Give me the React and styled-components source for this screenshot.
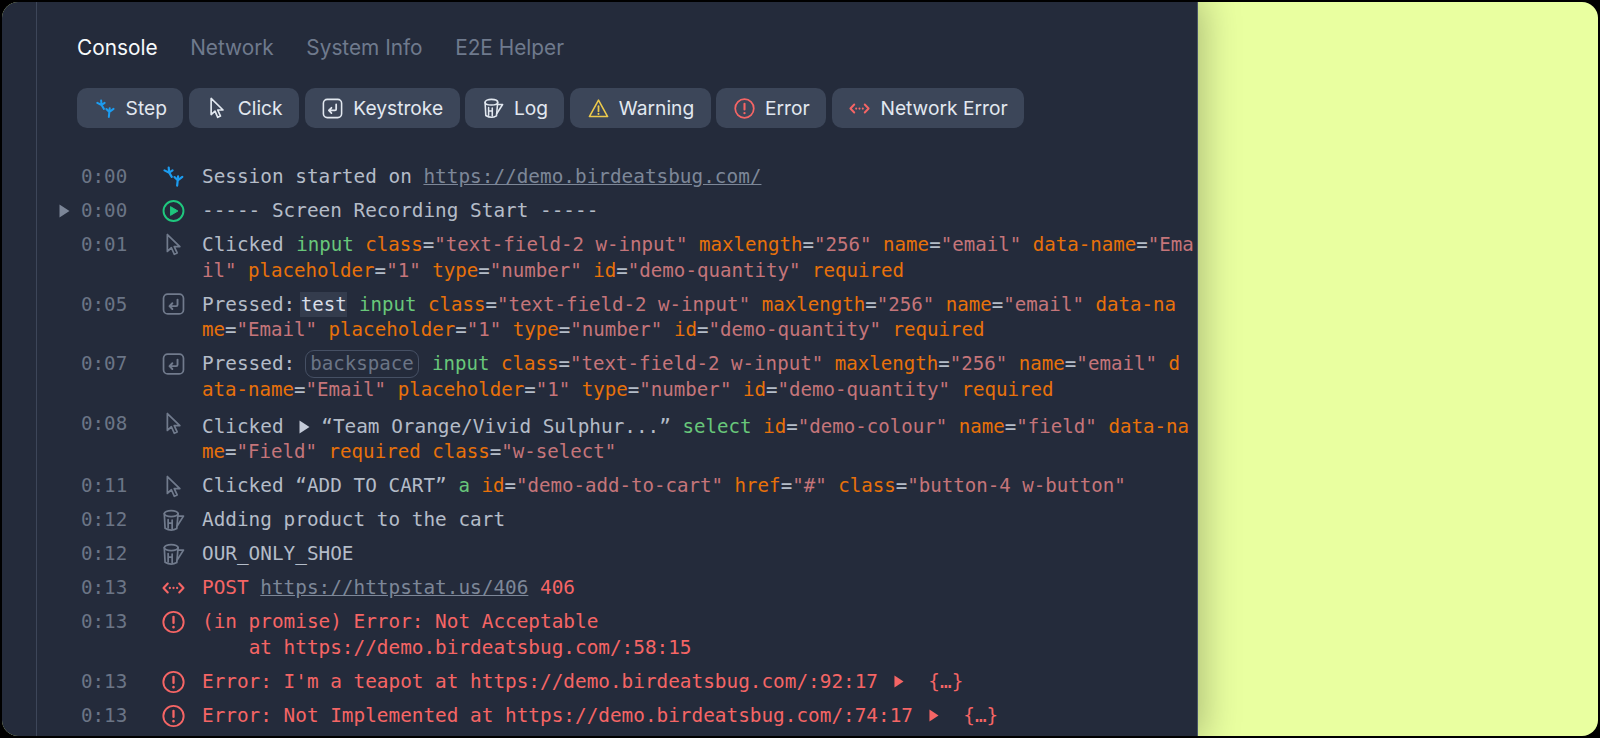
import React from "react";
import styled, { createGlobalStyle } from "styled-components";

const Global = createGlobalStyle`
  html, body { margin: 0; padding: 0; height: 100%; background: #000; }
  #root { height: 100%; }
`;

const Frame = styled.div`
  box-sizing: border-box;
  height: 738px;
  width: 1600px;
  padding: 2px;
  background: #000;
`;
const Window = styled.div`
  display: flex;
  height: 100%;
  border-radius: 16px;
  overflow: hidden;
  background: #e9ffa0;
`;
const Panel = styled.div`
  display: flex;
  flex: none;
  width: 1195px;
  height: 100%;
  background: #242b3b;
  border-right: 1px solid #4a5568;
  box-shadow: 0 0 36px 4px rgba(0, 0, 0, 0.28);
  overflow: hidden;
`;
const Rail = styled.div`
  flex: none;
  width: 34px;
  border-right: 1px solid #3d4659;
`;
const Main = styled.div`
  flex: 1;
  min-width: 0;
  padding: 31px 0 0 40px;
`;
const Tabs = styled.div`
  display: flex;
  gap: 32.6px;
  height: 30px;
  align-items: center;
`;
const Tab = styled.div`
  font: 400 20.8px/30px Inter, "Liberation Sans", sans-serif;
  color: ${(p) => (p.$active ? "#f7fafc" : "#6f7a8d")};
`;
const Filters = styled.div`
  display: flex;
  gap: 5.8px;
  margin-top: 25px;
`;
const Filter = styled.div`
  display: flex;
  align-items: center;
  height: 40px;
  padding: 0 16.4px 0 16px;
  border-radius: 10px;
  background: #3c4659;
  color: #e2e8f0;
  font: 400 19.2px/40px Inter, "Liberation Sans", sans-serif;
`;
const FilterIcon = styled.span`
  display: flex;
  justify-content: center;
  width: 24px;
  margin-right: 8.6px;
`;
const List = styled.div`
  margin: 32px 0 0 -22px;
  width: 1143px;
  font: 400 19.36px/25.6px "DejaVu Sans Mono", "Liberation Mono", monospace;
`;
const Row = styled.div`
  display: grid;
  grid-template-columns: 26px 81px 40px 994px;
  padding: 4.2px 0;
`;
const Caret = styled.div`
  display: flex;
  align-items: center;
  height: 25.6px;
  color: #7c8698;
`;
const Time = styled.div`
  color: #6b7586;
  font-size: 19.2px;
`;
const IconCell = styled.div`
  display: flex;
  justify-content: center;
  align-items: center;
  width: 23px;
  height: 25.6px;
  color: #717b8d;
`;
const Text = styled.div`
  white-space: pre-wrap;
  word-break: break-all;
  max-width: ${(p) => p.$limit || "none"};
  color: ${(p) => (p.$error ? "#f56565" : "#b4bcc8")};
`;
const Code = styled.span`
  font-size: 19.12px;
`;
const Tag = styled.span`
  color: #68c77a;
  margin-left: ${(p) => p.$gap || "0"};
`;
const AttrName = styled.span`
  color: #e8710a;
`;
const AttrValue = styled.span`
  color: #c5757a;
`;
const Link = styled.span`
  color: #7d8798;
  text-decoration: underline;
`;
const Key = styled.span`
  margin-left: 5px;
  padding: 0 0.5px;
  display: inline-block;
  background: #343c4d;
  color: #d8dee8;
  font-size: 19.12px;
`;
const KeyOutline = styled.span`
  display: inline-block;
  margin: -1px 1.5px -1px 10px;
  padding: 0 4px;
  border: 1px solid #465064;
  border-radius: 9px;
  color: #6b7586;
  font-size: 19.12px;
`;
const Tri = styled.svg`
  display: inline-block;
  vertical-align: ${(p) => p.$align || "-2px"};
  margin: ${(p) => p.$margin || "0 12px 0 4px"};
  color: ${(p) => p.$color || "#c3cad8"};
`;

const Triangle = ({ size = 14, ...rest }) => (
  <Tri width={size - 3} height={size} viewBox="0 0 11 14" {...rest}>
    <path d="M0.5 0.5 L10.5 7 L0.5 13.5 Z" fill="currentColor" />
  </Tri>
);

const Svg = ({ size = 23, children }) => (
  <svg
    width={size}
    height={size}
    viewBox="0 0 24 24"
    fill="none"
    stroke="currentColor"
    strokeWidth="1.8"
    strokeLinecap="round"
    strokeLinejoin="round"
  >
    {children}
  </svg>
);

const StepIcon = ({ size = 23 }) => (
  <Svg size={size}>
    <g stroke="#1c9cf0" strokeWidth="2.3" transform="translate(0 2)">
      <path d="M7.5 6 L2.6 3.6 M7.5 6 L7 0.8 M7.5 6 L11 3.6 M7.5 6 L10.2 10.4" />
      <path d="M16.4 14 L13 10.6 M16.4 14 L21.2 10.4 M16.4 14 L15.8 19.6 M16.4 14 L16.8 9.8" />
    </g>
  </Svg>
);
const PlayIcon = ({ size = 24 }) => (
  <Svg size={size}>
    <circle cx="12" cy="12" r="10.4" stroke="#1fc77e" strokeWidth="2" />
    <path d="M9.2 7.6 L16.6 12 L9.2 16.4 Z" fill="#1fc77e" stroke="#1fc77e" strokeWidth="1" />
  </Svg>
);
const CursorIcon = ({ size = 25 }) => (
  <Svg size={size}>
    <path d="M5.6 1.6 V19.2 L9.8 15.4 L12.8 22.2 L15.8 20.8 L12.8 14.2 H18.6 Z" />
  </Svg>
);
const KeyIcon = ({ size = 24 }) => (
  <Svg size={size}>
    <rect x="1.6" y="1.6" width="20.8" height="20.8" rx="4.4" />
    <path d="M16.2 7.4 V12.8 Q16.2 14.2 14.8 14.2 H8 M10.8 11.2 L7.8 14.2 L10.8 17.2" strokeWidth="2" />
  </Svg>
);
const MugIcon = ({ size = 25 }) => (
  <Svg size={size}>
    <ellipse cx="9.6" cy="4.8" rx="7.2" ry="3.2" />
    <path d="M2.4 4.8 L3.2 20 Q9.4 23.8 15.4 20.4 L16.8 4.8" />
    <path d="M6.4 11 V19.8 M10.6 11.6 V20.6 M6.4 14.8 H10.6 M16.8 7.4 H22.4 L16 17.4" />
  </Svg>
);
const WarnIcon = ({ size = 23 }) => (
  <Svg size={size}>
    <path d="M12 2.4 L22.4 21.2 H1.6 Z" stroke="#ecc94b" />
    <path d="M12 9.4 V15" stroke="#ecc94b" strokeWidth="2" />
    <path d="M12 18 V18.2" stroke="#ecc94b" strokeWidth="2.2" />
  </Svg>
);
const ErrorIcon = ({ size = 24 }) => (
  <Svg size={size}>
    <g stroke="#f56565">
      <circle cx="12" cy="12" r="10.6" strokeWidth="2" />
      <path d="M12 6.6 V13" strokeWidth="2.4" />
      <path d="M12 17.2 V17.4" strokeWidth="2.6" />
    </g>
  </Svg>
);
const NetIcon = ({ size = 24 }) => (
  <Svg size={size}>
    <g stroke="#f56565" strokeWidth="2.2">
      <path d="M6 7.4 L1.6 12 L6 16.6 M18 7.4 L22.4 12 L18 16.6" />
      <path d="M8.2 12 V12.1 M12 12 V12.1 M15.8 12 V12.1" strokeWidth="2.4" />
    </g>
  </Svg>
);

const filters = [
  ["Step", StepIcon],
  ["Click", CursorIcon],
  ["Keystroke", KeyIcon],
  ["Log", MugIcon],
  ["Warning", WarnIcon],
  ["Error", ErrorIcon],
  ["Network Error", NetIcon],
];

const A = ({ n, v, last }) => (
  <>
    <AttrName>{n}</AttrName>
    {v !== undefined && (
      <>
        =<AttrValue>"{v}"</AttrValue>
      </>
    )}
    {last ? "" : " "}
  </>
);

const inputAttrs = (
  <Code>
    <A n="class" v="text-field-2 w-input" />
    <A n="maxlength" v="256" />
    <A n="name" v="email" />
    <A n="data-name" v="Email" />
    <A n="placeholder" v="1" />
    <A n="type" v="number" />
    <A n="id" v="demo-quantity" />
    <A n="required" last />
  </Code>
);

const errorCaret = <Triangle size={13} $color="#f56565" $align="0" $margin="0 13px 0 4px" />;

const rows = [
  { t: "0:00", I: StepIcon, c: <>Session started on <Link>https://demo.birdeatsbug.com/</Link></> },
  { t: "0:00", I: PlayIcon, caret: true, c: "----- Screen Recording Start -----" },
  { t: "0:01", I: CursorIcon, c: <>Clicked <Code><Tag $gap="1px">input </Tag></Code>{inputAttrs}</> },
  { t: "0:05", I: KeyIcon, limit: "981px", c: <>Pressed:<Key>test</Key> <Code><Tag>input </Tag></Code>{inputAttrs}</> },
  { t: "0:07", I: KeyIcon, limit: "986px", c: <>Pressed:<KeyOutline>backspace</KeyOutline> <Code><Tag>input </Tag></Code>{inputAttrs}</> },
  {
    t: "0:08",
    I: CursorIcon,
    c: (
      <>
        Clicked <Triangle $align="-1px" $margin="9px 11px 0 4px" />“Team Orange/Vivid Sulphur...” <Code><Tag>select </Tag>
        <A n="id" v="demo-colour" />
        <A n="name" v="field" />
        <A n="data-name" v="Field" />
        <A n="required" />
        <A n="class" v="w-select" last /></Code>
      </>
    ),
  },
  {
    t: "0:11",
    I: CursorIcon,
    c: (
      <>
        Clicked “ADD TO CART” <Code><Tag>a </Tag><A n="id" v="demo-add-to-cart" />
        <A n="href" v="#" />
        <A n="class" v="button-4 w-button" last /></Code>
      </>
    ),
  },
  { t: "0:12", I: MugIcon, c: "Adding product to the cart" },
  { t: "0:12", I: MugIcon, c: "OUR_ONLY_SHOE" },
  { t: "0:13", I: NetIcon, err: true, c: <>POST <Link>https://httpstat.us/406</Link> 406</> },
  { t: "0:13", I: ErrorIcon, err: true, c: "(in promise) Error: Not Acceptable\n    at https://demo.birdeatsbug.com/:58:15" },
  {
    t: "0:13",
    I: ErrorIcon,
    err: true,
    c: <>Error: I'm a teapot at https://demo.birdeatsbug.com/:92:17 {errorCaret} {"{…}"}</>,
  },
  {
    t: "0:13",
    I: ErrorIcon,
    err: true,
    c: <>Error: Not Implemented at https://demo.birdeatsbug.com/:74:17 {errorCaret} {"{…}"}</>,
  },
];

export default function App() {
  return (
    <>
      <Global />
      <Frame>
        <Window>
          <Panel>
            <Rail />
            <Main>
              <Tabs>
                <Tab $active>Console</Tab>
                <Tab>Network</Tab>
                <Tab>System Info</Tab>
                <Tab>E2E Helper</Tab>
              </Tabs>
              <Filters>
                {filters.map(([label, Icon]) => (
                  <Filter key={label}>
                    <FilterIcon>
                      <Icon size={label === "Click" ? 22 : 21} />
                    </FilterIcon>
                    {label}
                  </Filter>
                ))}
              </Filters>
              <List>
                {rows.map((r, i) => (
                  <Row key={i}>
                    <Caret>
                      {r.caret && <Triangle $color="#7c8698" $margin="0 0 0 4px" />}
                    </Caret>
                    <Time>{r.t}</Time>
                    <IconCell>
                      <r.I />
                    </IconCell>
                    <Text $error={r.err} $limit={r.limit}>{r.c}</Text>
                  </Row>
                ))}
              </List>
            </Main>
          </Panel>
        </Window>
      </Frame>
    </>
  );
}
